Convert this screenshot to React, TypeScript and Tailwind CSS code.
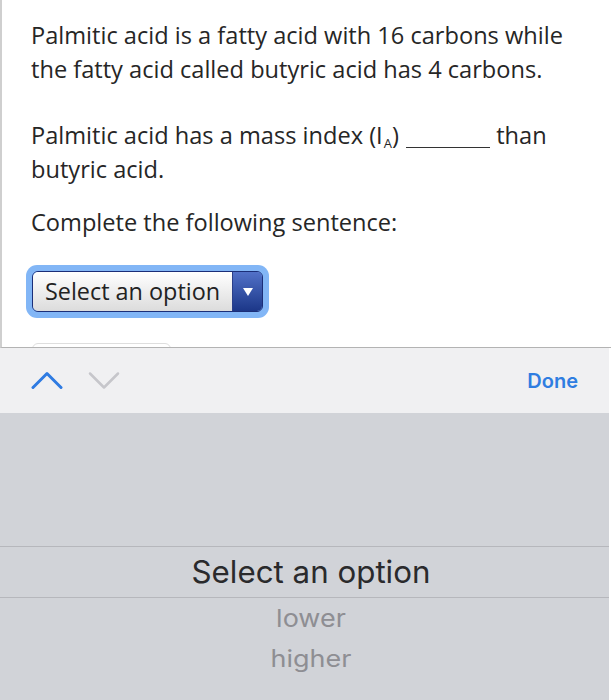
import React from "react";

export default function App() {
  return (
    <div className="w-[611px] h-[700px] bg-white flex flex-col overflow-hidden">
      <div
        className="h-[348px] shrink-0 overflow-hidden border-l-2 border-l-[#cfcfcf] border-b border-b-[#b3b3b3] pl-[29px] pr-[40px] pt-[17.5px] text-[#262626]"
        style={{ fontFamily: '"Open Sans", "Noto Sans", sans-serif' }}
      >
        <p className="text-[23.6px] leading-[34px]">
          Palmitic acid is a fatty acid with 16 carbons while the fatty acid called butyric acid has 4 carbons.
        </p>
        <p className="mt-[32px] text-[23.6px] leading-[34px]">
          Palmitic acid has a mass index (I
          <span className="ml-[1px] text-[13px] leading-none align-[-4px]">A</span>){" "}
          <span className="ml-[1px] inline-block w-[84px] h-[1px] bg-[#333] align-[-4px]"></span> than butyric acid.
        </p>
        <p className="mt-[19px] text-[23.6px] leading-[34px]">Complete the following sentence:</p>
        <div className="mt-[26.5px] ml-[-5px] inline-flex rounded-[11px] bg-[#82b6f6] p-[6px]">
          <div className="flex h-[41px] w-[231px] overflow-hidden rounded-[6px] border-[1.5px] border-[#1b2e78]">
            <div className="flex flex-1 items-center bg-gradient-to-b from-[#ffffff] to-[#dcdcdc] pl-[12px] text-[23.4px] text-[#222]">
              Select an option
            </div>
            <div className="flex w-[30px] items-center justify-center border-l border-l-[#2a3f8a] bg-gradient-to-b from-[#5271c8] to-[#1c3788]">
              <svg width="10" height="8" viewBox="0 0 10 8">
                <polygon points="0,0 10,0 5,8" fill="#ffffff" />
              </svg>
            </div>
          </div>
        </div>
        <div className="mt-[25px] ml-[1px] h-[20px] w-[139px] rounded-t-[6px] border border-[#dedede]"></div>
      </div>

      <div
        className="h-[65px] shrink-0 mr-[2px] flex items-center bg-[#f0f0f2] pl-[31px] pr-[31px]"
        style={{ fontFamily: 'Inter, "Liberation Sans", sans-serif' }}
      >
        <svg width="32" height="19" viewBox="0 0 32 19">
          <polyline points="2,16.5 16,2.5 30,16.5" fill="none" stroke="#2f7be2" strokeWidth="3" strokeLinecap="round" strokeLinejoin="round" />
        </svg>
        <svg width="32" height="19" viewBox="0 0 32 19" className="ml-[25px]">
          <polyline points="2,2.5 16,16.5 30,2.5" fill="none" stroke="#c6c6cb" strokeWidth="2.5" strokeLinecap="round" strokeLinejoin="round" />
        </svg>
        <span className="ml-auto text-[20px] font-semibold text-[#2f7de1]">Done</span>
      </div>

      <div
        className="flex-1 mr-[2px] bg-[#d1d3d8] pt-[133px]"
        style={{ fontFamily: 'Inter, "Liberation Sans", sans-serif' }}
      >
        <div className="flex h-[52px] items-center justify-center border-y border-[#b6b7bc] pl-[13px] text-[31.3px] text-[#2a2a2c]">
          Select an option
        </div>
        <div className="flex h-[41px] items-center justify-center pl-[13px] pt-[1px] text-[27px] text-[#8e8e93]">
          <span className="inline-block scale-y-[0.9]">lower</span>
        </div>
        <div className="flex h-[40px] items-center justify-center pl-[13px] text-[27px] text-[#8e8e93]">
          <span className="inline-block scale-y-[0.88]">higher</span>
        </div>
      </div>
    </div>
  );
}
